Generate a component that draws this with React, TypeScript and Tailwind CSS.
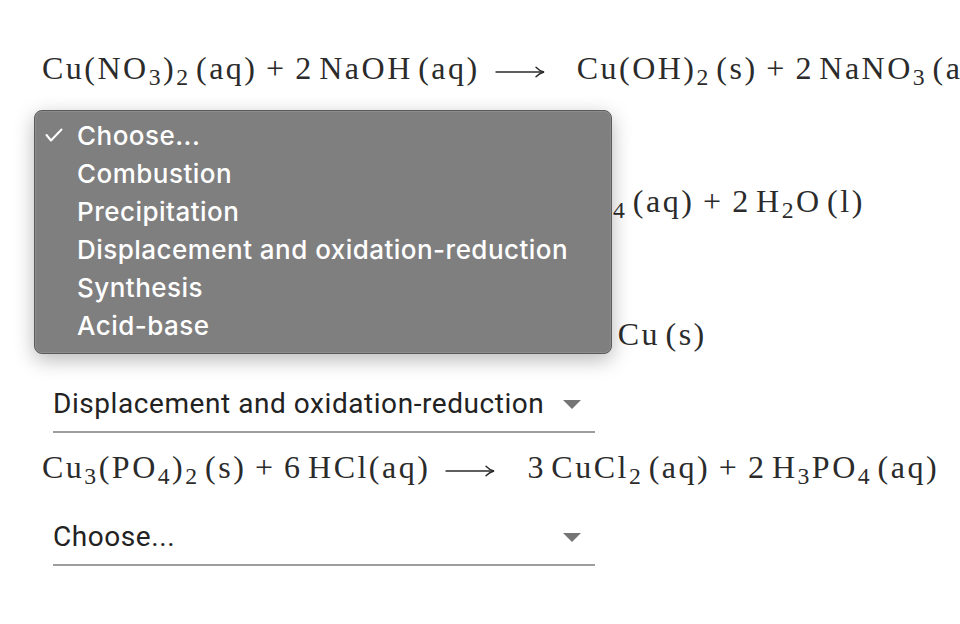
import React from "react";

const Sub = ({ children }: { children: React.ReactNode }) => (
  <span className="relative top-[0.24em] text-[0.74em] leading-none">{children}</span>
);

const Th = () => <span className="inline-block w-[0.17em]" />;

const Plus = () => <span className="mx-[0.27em]">+</span>;

const Arrow = () => (
  <svg
    className="inline-block shrink-0 ml-[15px] mr-[32px] align-middle"
    width="50"
    height="14"
    viewBox="0 0 50 14"
    fill="none"
    stroke="#2b2b2b"
    strokeWidth="1.4"
    strokeLinecap="round"
  >
    <path d="M1 7 H48.5" />
    <path d="M41 2.2 Q44.5 6 49 7 Q44.5 8 41 11.8" />
  </svg>
);

const Eq = ({ children }: { children: React.ReactNode }) => (
  <div
    className="h-[60px] flex items-center text-[32px] tracking-[0.078em] text-[#2b2b2b] leading-none"
    style={{ fontFamily: '"Liberation Serif", "Times New Roman", serif' }}
  >
    <span className="whitespace-nowrap shrink-0">{children}</span>
  </div>
);

const Select = ({ value }: { value: string }) => (
  <div
    className="mt-[13px] mb-[4px] ml-[11px] w-[542px] h-[56px] border-b-2 border-[#9e9e9e] flex items-center text-[28px] tracking-[0.02em] text-[#222222]"
    style={{ fontFamily: "Roboto, sans-serif" }}
  >
    <span className="flex-1 whitespace-nowrap">{value}</span>
    <svg className="mr-[14px]" width="18" height="9" viewBox="0 0 18 9">
      <path d="M0 0 L18 0 L9 9 Z" fill="#757575" />
    </svg>
  </div>
);

const items = [
  "Choose...",
  "Combustion",
  "Precipitation",
  "Displacement and oxidation-reduction",
  "Synthesis",
  "Acid-base",
];

export default function App() {
  return (
    <div className="relative w-[960px] h-[624px] overflow-hidden bg-white">
      <div className="pl-[42px] pt-[38px] flex flex-col">
        <Eq>
          Cu(NO<Sub>3</Sub>)<Sub>2</Sub>
          <Th />
          (aq)
          <Plus />2<Th />
          NaOH
          <Th />
          (aq)
          <Arrow />
          Cu(OH)<Sub>2</Sub>
          <Th />
          (s)
          <Plus />2<Th />
          NaNO<Sub>3</Sub>
          <Th />
          (aq)
        </Eq>
        <Select value="Choose..." />
        <Eq>
          Cu(OH)<Sub>2</Sub>
          <Th />
          (s)
          <Plus />H<Sub>2</Sub>SO<Sub>4</Sub>
          <Th />
          (aq)
          <Arrow />
          CuSO<Sub>4</Sub>
          <Th />
          (aq)
          <Plus />2<Th />
          H<Sub>2</Sub>O<Th />
          (l)
        </Eq>
        <Select value="Acid-base" />
        <Eq>
          Zn<Th />
          (s)
          <Plus />CuCl<Sub>2</Sub>
          <Th />
          (aq)
          <Arrow />
          ZnCl<Sub>2</Sub>
          <Th />
          (aq)
          <Plus />
          Cu<Th />
          (s)
        </Eq>
        <Select value="Displacement and oxidation-reduction" />
        <Eq>
          Cu<Sub>3</Sub>(PO<Sub>4</Sub>)<Sub>2</Sub>
          <Th />
          (s)
          <Plus />6<Th />
          HCl(aq)
          <Arrow />3<Th />
          CuCl<Sub>2</Sub>
          <Th />
          (aq)
          <Plus />2<Th />
          H<Sub>3</Sub>PO<Sub>4</Sub>
          <Th />
          (aq)
        </Eq>
        <Select value="Choose..." />
      </div>

      <div
        className="absolute left-[34px] top-[110px] w-[578px] h-[244px] rounded-[8px] bg-[#7f7f7f] border border-[#5a5a5a] shadow-[0_6px_20px_rgba(0,0,0,0.28)] pt-[5px] text-white text-[26px] font-medium tracking-[0.018em]"
        style={{ fontFamily: "Inter, 'Noto Sans', sans-serif" }}
      >
        <div className="absolute inset-0 rounded-[7px] border border-[#9a9a9a]/50 pointer-events-none" />
        {items.map((it, i) => (
          <div key={it} className="h-[38px] flex items-center">
            <span className="w-[42px] pl-[10px] flex items-center">
              {i === 0 ? (
                <svg width="18" height="14" viewBox="0 0 18 14" fill="none" stroke="white" strokeWidth="2" strokeLinecap="round" strokeLinejoin="round">
                  <path d="M1.5 7 L6 12.5 L16.5 1.5" />
                </svg>
              ) : null}
            </span>
            <span className="whitespace-nowrap">{it}</span>
          </div>
        ))}
      </div>
    </div>
  );
}
